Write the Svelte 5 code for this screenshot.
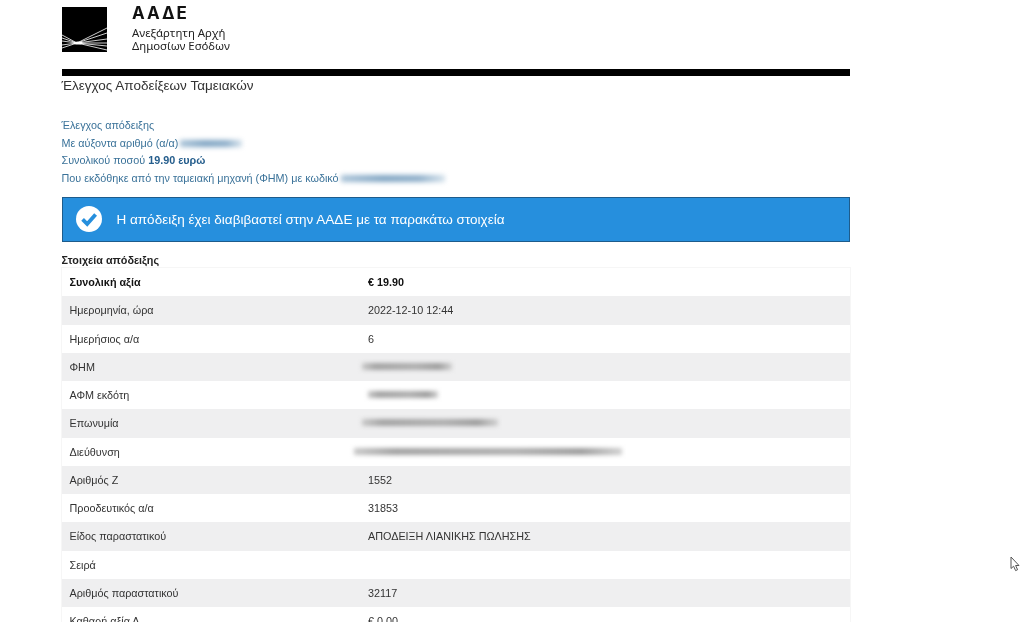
<script>
  const rows = [
    { label: 'Συνολική αξία', value: '€ 19.90', bold: true },
    { label: 'Ημερομηνία, ώρα', value: '2022-12-10 12:44' },
    { label: 'Ημερήσιος α/α', value: '6' },
    { label: 'ΦΗΜ', smudge: [-6, 90] },
    { label: 'ΑΦΜ εκδότη', smudge: [0, 70] },
    { label: 'Επωνυμία', smudge: [-6, 136] },
    { label: 'Διεύθυνση', smudge: [-14, 268] },
    { label: 'Αριθμός Ζ', value: '1552' },
    { label: 'Προοδευτικός α/α', value: '31853' },
    { label: 'Είδος παραστατικού', value: 'ΑΠΟΔΕΙΞΗ ΛΙΑΝΙΚΗΣ ΠΩΛΗΣΗΣ' },
    { label: 'Σειρά', value: '' },
    { label: 'Αριθμός παραστατικού', value: '32117' },
    { label: 'Καθαρή αξία Α', value: '€ 0.00' }
  ]
</script>

<div class="page">
  <header>
    <svg class="mark" viewBox="0 0 45 45" width="45" height="45" aria-hidden="true">
      <rect width="45" height="45" fill="#000" />
      <g stroke="#fff" fill="none" stroke-width="0.8">
        <path d="M0 28 15 36M0 31 15 36M0 34 15 36M0 38 15 36M0 41 15 36" />
        <path d="M45 21 15 36M45 26 15 36M45 32 15 36M45 36 15 36M45 39 15 36M45 43 15 36" />
      </g>
      <ellipse cx="16" cy="36" rx="4.5" ry="1.6" fill="#fff" />
    </svg>
    <div class="brand">
      <div class="acronym">ΑΑΔΕ</div>
      <div class="authority">Ανεξάρτητη Αρχή<br />Δημοσίων Εσόδων</div>
    </div>
  </header>

  <div class="rule"></div>
  <h1>Έλεγχος Αποδείξεων Ταμειακών</h1>

  <div class="query">
    <div>Έλεγχος απόδειξης</div>
    <div>Με αύξοντα αριθμό (α/α)<span class="smudge blue" style="width:62px"></span></div>
    <div>Συνολικού ποσού <b>19.90 ευρώ</b></div>
    <div>Που εκδόθηκε από την ταμειακή μηχανή (ΦΗΜ) με κωδικό<span class="smudge blue" style="width:104px"></span></div>
  </div>

  <div class="banner">
    <svg viewBox="0 0 26 26" width="26" height="26" aria-hidden="true">
      <circle cx="13" cy="13" r="13" fill="#fff" />
      <path d="M6.6 13.4 11.2 18 19.6 8.6" fill="none" stroke="#268fdd" stroke-width="3.8" />
    </svg>
    <span>Η απόδειξη έχει διαβιβαστεί στην ΑΑΔΕ με τα παρακάτω στοιχεία</span>
  </div>

  <h2>Στοιχεία απόδειξης</h2>

  <table>
    <tbody>
      {#each rows as row}
        <tr class:bold={row.bold}>
          <td>{row.label}</td>
          <td>
            {#if row.smudge}
              <span class="smudge" style="margin-left:{row.smudge[0]}px;width:{row.smudge[1]}px"></span>
            {:else}
              {row.value}
            {/if}
          </td>
        </tr>
      {/each}
    </tbody>
  </table>
</div>

<svg class="cursor" viewBox="0 0 11 16" width="11" height="16" aria-hidden="true">
  <path d="M1 1V12.5L3.6 10.2 5.6 14.6 7.6 13.7 5.6 9.5H9Z" fill="#fff" stroke="#555" stroke-width="1" />
</svg>

<style>
  :global(body) {
    background: #fff;
    overflow: hidden;
    height: 622px;
  }
  .page {
    width: 788.5px;
    margin-left: 61.5px;
    padding-top: 7px;
    font-family: 'Liberation Sans', Arial, sans-serif;
    font-size: 10.8px;
    color: #333;
    filter: blur(0.25px);
  }
  header {
    display: flex;
    height: 62px;
  }
  .mark {
    display: block;
  }
  .brand {
    margin-left: 25.5px;
    font-family: 'Noto Sans', sans-serif;
    color: #222;
  }
  .acronym {
    font-family: Inter, sans-serif;
    font-size: 17px;
    font-weight: 700;
    line-height: 13px;
    letter-spacing: 2px;
    color: #111;
  }
  .authority {
    margin-top: 6px;
    font-size: 11.4px;
    line-height: 13px;
  }
  .rule {
    height: 7px;
    background: #000;
  }
  h1 {
    margin: 0;
    font-size: 13.5px;
    font-weight: 400;
    line-height: 20px;
    color: #333;
  }
  .query {
    margin-top: 21px;
    line-height: 17.5px;
    color: #3a7299;
  }
  .query b {
    color: #245d8c;
  }
  .smudge {
    display: inline-block;
    height: 7px;
    vertical-align: 1px;
    background: linear-gradient(90deg, #c8c8c8, #a2a2a2 15%, #aeaeae 60%, #9c9c9c 85%, #d0d0d0);
    filter: blur(2px);
  }
  .smudge.blue {
    height: 7px;
    margin-left: 2px;
    vertical-align: 0;
    background: linear-gradient(90deg, #a9c3d8, #7fa4c2 40%, #8aacc8 75%, #d5e2ec);
    filter: blur(2.4px);
  }
  .banner {
    display: flex;
    align-items: center;
    gap: 15px;
    box-sizing: border-box;
    height: 44.5px;
    margin-top: 10px;
    padding-left: 13px;
    background: #268fdd;
    border: 1px solid #1d5c8c;
    color: #fff;
    font-size: 13.5px;
  }
  h2 {
    margin: 11px 0 0;
    font-size: 10.8px;
    font-weight: 700;
    line-height: 15.5px;
    color: #222;
  }
  table {
    width: 100%;
    border-collapse: collapse;
    table-layout: fixed;
    box-shadow: 0 0 0 1px #f6f6f6;
  }
  td {
    height: 28.25px;
    padding: 0 8px;
    box-sizing: border-box;
    vertical-align: middle;
  }
  td:first-child {
    width: 298.5px;
  }
  tr:nth-child(even) {
    background: #efeff0;
  }
  tr.bold {
    font-weight: 700;
    color: #111;
  }
  .cursor {
    position: absolute;
    left: 1010px;
    top: 556px;
  }
</style>
